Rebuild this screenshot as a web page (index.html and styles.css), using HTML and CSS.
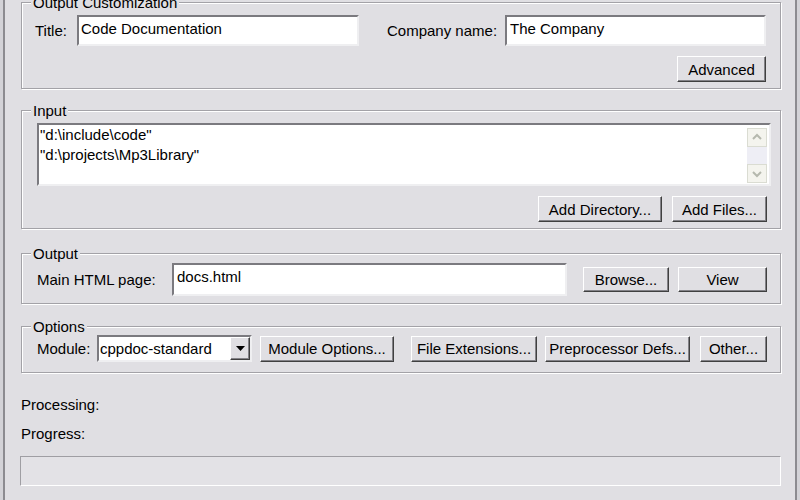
FILE: index.html
```html
<!DOCTYPE html>
<html>
<head>
<meta charset="utf-8">
<title>CppDoc</title>
<link rel="stylesheet" href="styles.css">
</head>
<body>
<div class="window">
  <fieldset class="group g-custom">
    <legend>Output Customization</legend>
    <div class="inner">
      <div class="row">
        <span class="lbl lbl-title">Title:</span>
        <div class="field f-title">Code Documentation</div>
        <span class="lbl lbl-company">Company name:</span>
        <div class="field f-company">The Company</div>
      </div>
      <div class="row row-end btn-row">
        <button class="btn w-adv">Advanced</button>
      </div>
    </div>
  </fieldset>

  <fieldset class="group g-input">
    <legend>Input</legend>
    <div class="inner">
      <div class="listbox">
        <div class="list-text">
          <div>"d:\include\code"</div>
          <div>"d:\projects\Mp3Library"</div>
        </div>
        <div class="vscroll">
          <div class="sb-btn"><svg width="18" height="17" viewBox="0 0 18 17"><polyline points="5,10 9,6 13,10" fill="none" stroke="#b5b8ae" stroke-width="2"/></svg></div>
          <div class="sb-track"></div>
          <div class="sb-btn"><svg width="18" height="17" viewBox="0 0 18 17"><polyline points="5,7 9,11 13,7" fill="none" stroke="#b5b8ae" stroke-width="2"/></svg></div>
        </div>
      </div>
      <div class="row row-end btn-row btn-row-input">
        <button class="btn w-adddir">Add Directory...</button>
        <button class="btn w-addfiles">Add Files...</button>
      </div>
    </div>
  </fieldset>

  <fieldset class="group g-output">
    <legend>Output</legend>
    <div class="inner">
      <div class="row">
        <span class="lbl lbl-main">Main HTML page:</span>
        <div class="field f-main">docs.html</div>
        <button class="btn w-browse">Browse...</button>
        <button class="btn w-view">View</button>
      </div>
    </div>
  </fieldset>

  <fieldset class="group g-options">
    <legend>Options</legend>
    <div class="inner">
      <div class="row">
        <span class="lbl lbl-module">Module:</span>
        <div class="select">
          <span class="sel-text">cppdoc-standard</span>
          <span class="sel-btn"><svg width="9" height="5" viewBox="0 0 9 5"><polygon points="0,0 9,0 4.5,5" fill="#000"/></svg></span>
        </div>
        <button class="btn w-modopt">Module Options...</button>
        <button class="btn w-fileext">File Extensions...</button>
        <button class="btn w-preproc">Preprocessor Defs...</button>
        <button class="btn w-other">Other...</button>
      </div>
    </div>
  </fieldset>

  <div class="status s-processing">Processing:</div>
  <div class="status s-progress">Progress:</div>
  <div class="progress"></div>
</div>
</body>
</html>
```

FILE: styles.css
```css
* { box-sizing: border-box; }
html, body { margin: 0; padding: 0; }
body {
  width: 800px;
  height: 500px;
  overflow: hidden;
  background: #d3d2d7;
  font-family: "Liberation Sans", Arial, sans-serif;
  font-size: 15px;
  color: #000;
}
.window {
  display: flex;
  flex-direction: column;
  height: 500px;
  margin: 0 3px;
  background: #e0dfe3;
  border-left: 2px solid #8c8b90;
  border-right: 2px solid #8c8b90;
  padding: 0 14px 0 16px;
}

/* group boxes */
.group {
  margin: 0;
  padding: 0;
  min-width: 0;
  border: 1px solid #a3a2a7;
  box-shadow: inset 1px 1px 0 #fff, 1px 1px 0 #fff;
}
.group legend {
  margin-left: 9px;
  padding: 0 2px;
  height: 17px;
  line-height: 17px;
  background: #e0dfe3;
}
.g-custom { margin-top: -6px; }
.g-input { margin-top: 13px; }
.g-output { margin-top: 16px; }
.g-options { margin-top: 14px; }

.g-custom .inner { padding: 4px 14px 6px 13px; }
.g-input .inner { padding: 4px 9px 6px 15px; }
.g-output .inner { padding: 1px 13px 7px 15px; }
.g-options .inner { padding: 0 13px 10px 15px; }

.row {
  display: flex;
  align-items: center;
}
.row-end { justify-content: flex-end; }
.btn-row { margin-top: 10px; }
.btn-row-input { padding-right: 4px; }

.lbl { white-space: nowrap; flex: none; }
.lbl-title { width: 42px; }
.lbl-company { width: 118px; margin-left: 28px; }
.lbl-main { width: 135px; }
.lbl-module { width: 60px; }

/* sunken edit fields */
.field {
  flex: none;
  height: 31px;
  background: #fff;
  border: 2px solid;
  border-color: #7b7a7f #efeff1 #efeff1 #7b7a7f;
  padding: 2px 3px;
  line-height: 20px;
  white-space: nowrap;
}
.f-title { width: 282px; padding-left: 2px; }
.f-company { width: 261px; }
.f-main { width: 395px; height: 33px; }

/* list box */
.listbox {
  display: flex;
  height: 63px;
  background: #fff;
  border: 2px solid;
  border-color: #7b7a7f #efeff1 #efeff1 #7b7a7f;
}
.list-text {
  flex: 1;
  padding: 0 1px;
  line-height: 20px;
  white-space: nowrap;
}
.vscroll {
  width: 20px;
  margin: 3px 2px 0 0;
  display: flex;
  flex-direction: column;
}
.sb-btn {
  height: 19px;
  border: 1px solid #dadcd2;
  background: #f4f4ee;
  display: flex;
  align-items: center;
  justify-content: center;
}
.sb-track {
  height: 17px;
  background: #eeeef5;
}

/* buttons */
.btn {
  flex: none;
  font: inherit;
  color: #000;
  height: 26px;
  padding: 0;
  background: #e0dfe3;
  border: 1px solid;
  border-color: #fff #404040 #404040 #fff;
  box-shadow: inset -1px -1px 0 #838287;
  text-align: center;
  white-space: nowrap;
}
.w-adv { width: 89px; }
.w-adddir { width: 124px; }
.w-addfiles { width: 95px; margin-left: 10px; }
.w-browse { width: 86px; margin-left: 16px; height: 25px; }
.w-view { width: 89px; margin-left: 9px; height: 25px; }
.w-modopt { width: 134px; margin-left: 8px; }
.w-fileext { width: 126px; margin-left: 17px; }
.w-preproc { width: 145px; margin-left: 8px; }
.w-other { width: 67px; margin-left: 10px; }

/* combo box */
.select {
  flex: none;
  width: 155px;
  height: 27px;
  display: flex;
  background: #fff;
  border: 2px solid;
  border-color: #7b7a7f #efeff1 #efeff1 #7b7a7f;
}
.sel-text {
  flex: 1;
  padding-left: 1px;
  line-height: 23px;
  white-space: nowrap;
}
.sel-btn {
  width: 20px;
  display: flex;
  align-items: center;
  justify-content: center;
  background: #e0dfe3;
  border: 1px solid;
  border-color: #fff #404040 #404040 #fff;
  box-shadow: inset -1px -1px 0 #838287;
}

/* status area */
.status { line-height: 20px; }
.s-processing { margin-top: 22px; }
.s-progress { margin-top: 9px; }
.progress {
  height: 30px;
  margin: 12px 0 0 -1px;
  border: 1px solid;
  border-color: #9f9ea3 #fff #fff #9f9ea3;
  background: #e3e2e6;
}
```
